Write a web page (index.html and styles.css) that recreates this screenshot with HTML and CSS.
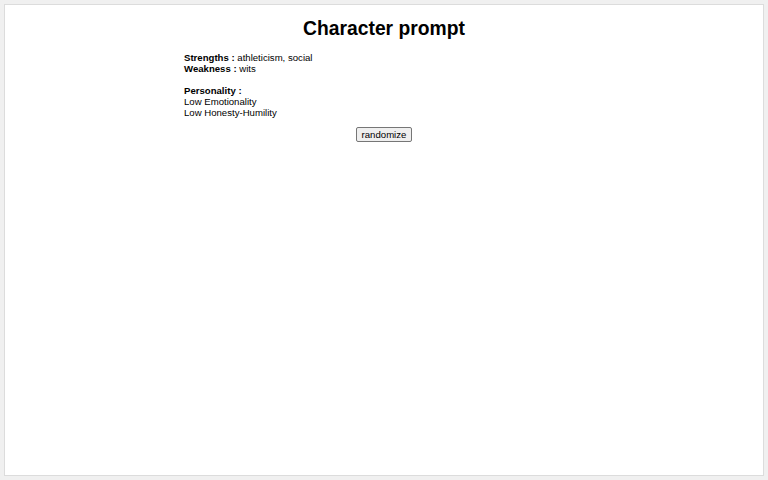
FILE: index.html
```html
<!DOCTYPE html>
<html>
<head>
<meta charset="utf-8">
<link rel="stylesheet" href="styles.css">
</head>
<body>
<div class="page">
  <h1 class="title">Character prompt</h1>
  <div class="content">
    <div class="line"><b>Strengths :</b> athleticism, social</div>
    <div class="line"><b>Weakness :</b> wits</div>
    <div class="gap"></div>
    <div class="line"><b>Personality :</b></div>
    <div class="line">Low Emotionality</div>
    <div class="line">Low Honesty-Humility</div>
    <div class="actions"><button class="btn">randomize</button></div>
  </div>
</div>
</body>
</html>
```
FILE: styles.css
```css
html, body {
  margin: 0;
  padding: 0;
  height: 100%;
}
body {
  background: #f0f0f0;
  font-family: "Liberation Sans", Arial, sans-serif;
  padding: 4px;
  box-sizing: border-box;
}
.page {
  background: #fff;
  border: 1px solid #dcdcdc;
  height: 100%;
  box-sizing: border-box;
}
.title {
  margin: 12px 0 0;
  text-align: center;
  font-size: 19.3px;
  font-weight: bold;
  color: #000;
  line-height: 24px;
}
.content {
  width: 400px;
  margin: 11px auto 0;
  font-size: 9.6px;
  line-height: 11px;
  color: #000;
}
.gap {
  height: 11px;
}
.actions {
  text-align: center;
  margin-top: 9px;
}
.btn {
  font-family: "Liberation Sans", Arial, sans-serif;
  font-size: 9.6px;
  padding: 1px 5px;
  background: #efefef;
  border: 1px solid #767676;
  border-radius: 2px;
  color: #000;
}
```
